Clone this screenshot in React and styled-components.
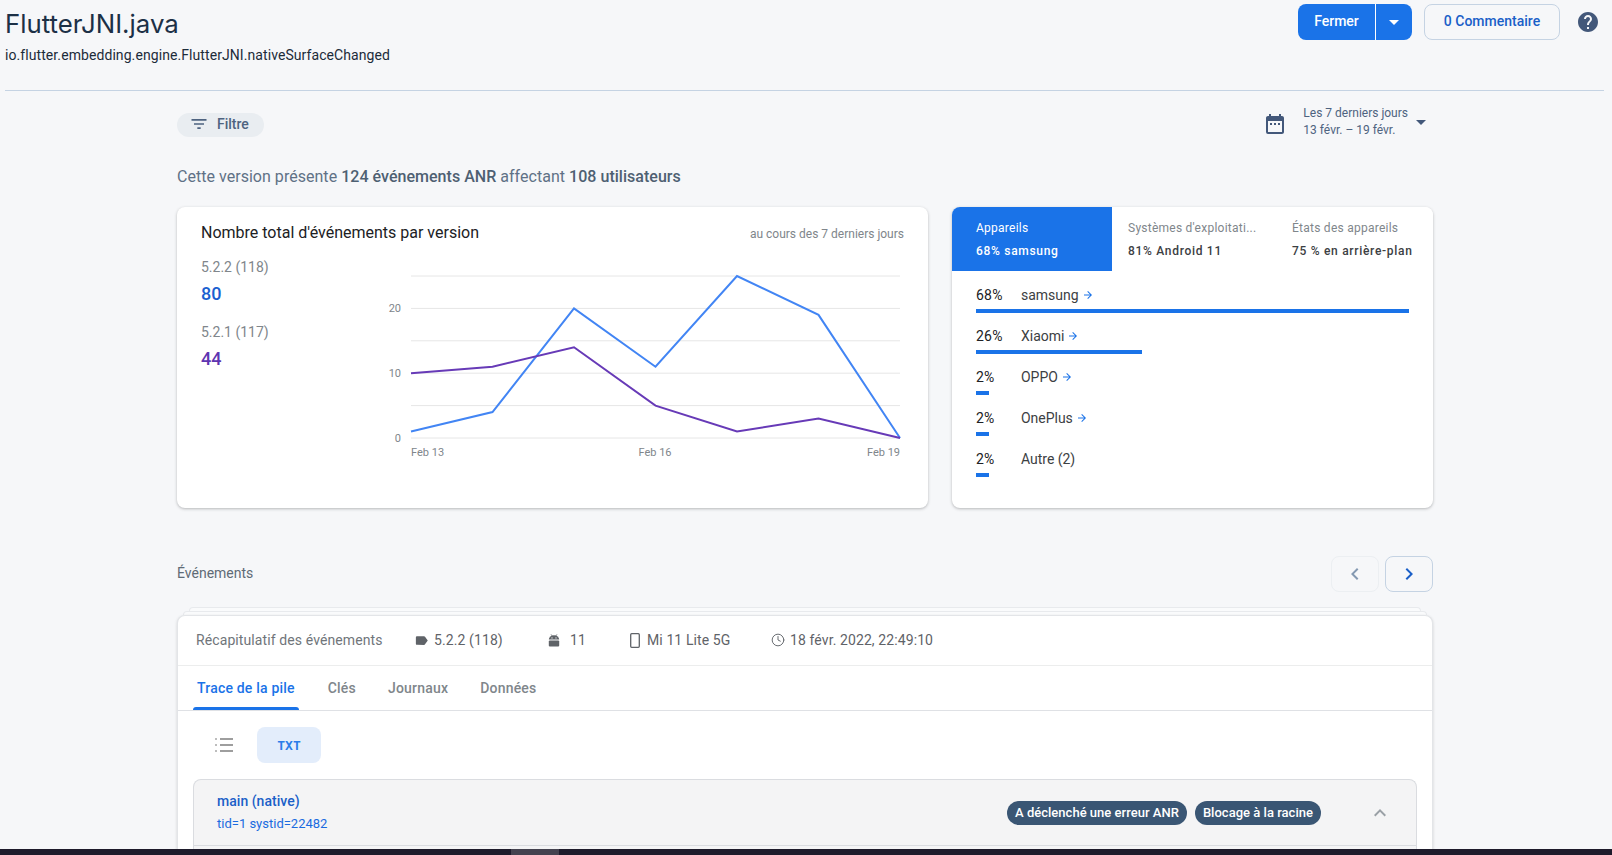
import React from 'react'
import styled, { createGlobalStyle } from 'styled-components'
import {
  MdFilterList,
  MdDateRange,
  MdHelp,
  MdArrowDropDown,
  MdArrowForward,
  MdChevronLeft,
  MdChevronRight,
  MdKeyboardArrowUp,
  MdLabel,
} from 'react-icons/md'
import { Clock } from 'lucide-react'

const blueSeries = [1, 4, 20, 11, 25, 19, 0]
const purpleSeries = [10, 11, 14, 5, 1, 3, 0]
const devices = [
  { pct: '68%', name: 'samsung', width: 433, link: true },
  { pct: '26%', name: 'Xiaomi', width: 166, link: true },
  { pct: '2%', name: 'OPPO', width: 13, link: true },
  { pct: '2%', name: 'OnePlus', width: 13, link: true },
  { pct: '2%', name: 'Autre (2)', width: 13, link: false },
]

const toPoints = (values) =>
  values.map((v, i) => `${31 + i * 81.5},${170 - v * 6.48}`).join(' ')

function Chart() {
  return (
    <ChartSvg viewBox="0 0 524 200" width="524" height="200">
      {[0, 5, 10, 15, 20, 25].map((v) => (
        <line key={v} x1="31" x2="520" y1={170 - v * 6.48} y2={170 - v * 6.48} stroke="#e6e6e6" strokeWidth="1" />
      ))}
      {[0, 10, 20].map((v) => (
        <AxisText key={v} x="21" y={174 - v * 6.48} textAnchor="end">{v}</AxisText>
      ))}
      <AxisText x="31" y="188">Feb 13</AxisText>
      <AxisText x="275" y="188" textAnchor="middle">Feb 16</AxisText>
      <AxisText x="520" y="188" textAnchor="end">Feb 19</AxisText>
      <polyline points={toPoints(blueSeries)} fill="none" stroke="#4285f4" strokeWidth="2" />
      <polyline points={toPoints(purpleSeries)} fill="none" stroke="#673ab7" strokeWidth="2" />
    </ChartSvg>
  )
}

function AndroidGlyph() {
  return (
    <svg width="12" height="13" viewBox="0 0 12 13" fill="currentColor">
      <path d="M0.8 5.6a5.2 4.4 0 0 1 10.4 0z" />
      <path d="M3 .3 4.2 2M9 .3 7.8 2" stroke="currentColor" strokeWidth="0.7" />
      <rect x="0.8" y="6.4" width="10.4" height="6" rx="1" />
      <circle cx="4" cy="3.9" r="0.6" fill="#fff" />
      <circle cx="8" cy="3.9" r="0.6" fill="#fff" />
    </svg>
  )
}

function PhoneGlyph() {
  return (
    <svg width="10" height="15" viewBox="0 0 10 15">
      <rect x="0.7" y="0.7" width="8.6" height="13.6" rx="1" fill="none" stroke="currentColor" strokeWidth="1.3" />
    </svg>
  )
}

function ListGlyph() {
  return (
    <svg width="18" height="14" viewBox="0 0 18 14" fill="#9e9e9e">
      {[0, 6, 12].map((y) => (
        <g key={y}>
          <rect x="0" y={y} width="2" height="2" fill="#bdbdbd" />
          <rect x="5" y={y} width="13" height="2" />
        </g>
      ))}
    </svg>
  )
}

export default function App() {
  return (
    <Page>
      <GlobalStyle />
      <Scroll>
        <Header>
          <div>
            <Title>FlutterJNI.java</Title>
            <Subtitle>io.flutter.embedding.engine.FlutterJNI.nativeSurfaceChanged</Subtitle>
          </div>
          <Actions>
            <SplitButton>
              <SplitMain>Fermer</SplitMain>
              <SplitArrow><MdArrowDropDown size={24} /></SplitArrow>
            </SplitButton>
            <CommentButton>0 Commentaire</CommentButton>
            <HelpIcon size={24} />
          </Actions>
        </Header>
        <Content>
          <FilterRow>
            <FilterChip><MdFilterList size={20} /> Filtre</FilterChip>
            <DatePicker>
              <MdDateRange size={24} />
              <DateText>
                <span>Les 7 derniers jours</span>
                <span>13 févr. – 19 févr.</span>
              </DateText>
              <MdArrowDropDown size={24} />
            </DatePicker>
          </FilterRow>
          <Summary>
            Cette version présente <b>124 événements ANR</b> affectant <b>108 utilisateurs</b>
          </Summary>
          <Cards>
            <ChartCard>
              <CardHead>
                <CardTitle>Nombre total d'événements par version</CardTitle>
                <CardHint>au cours des 7 derniers jours</CardHint>
              </CardHead>
              <ChartBody>
                <Legend>
                  <LegendLabel>5.2.2 (118)</LegendLabel>
                  <LegendValue $color="#1a5fd0">80</LegendValue>
                  <LegendLabel>5.2.1 (117)</LegendLabel>
                  <LegendValue $color="#5e35b1">44</LegendValue>
                </Legend>
                <Chart />
              </ChartBody>
            </ChartCard>
            <DeviceCard>
              <DeviceTabs>
                <DeviceTab $active $width={160} $pad={24}>
                  <small>Appareils</small>
                  <strong>68% samsung</strong>
                </DeviceTab>
                <DeviceTab $width={180} $pad={16}>
                  <small>Systèmes d'exploitati...</small>
                  <strong>81% Android 11</strong>
                </DeviceTab>
                <DeviceTab $width={141} $pad={0}>
                  <small>États des appareils</small>
                  <strong>75 % en arrière-plan</strong>
                </DeviceTab>
              </DeviceTabs>
              <DeviceList>
                {devices.map((d) => (
                  <DeviceRow key={d.name}>
                    <DeviceLine>
                      <DevicePct>{d.pct}</DevicePct>
                      <DeviceName>{d.name}</DeviceName>
                      {d.link && <MdArrowForward size={12} color="#1a73e8" />}
                    </DeviceLine>
                    <DeviceBar style={{ width: d.width }} />
                  </DeviceRow>
                ))}
              </DeviceList>
            </DeviceCard>
          </Cards>
          <EventsHead>
            <EventsLabel>Événements</EventsLabel>
            <NavGroup>
              <NavButton $disabled><MdChevronLeft size={24} /></NavButton>
              <NavButton><MdChevronRight size={24} /></NavButton>
            </NavGroup>
          </EventsHead>
          <StackEdge $inset={12} />
          <StackEdge $inset={6} />
          <EventCard>
            <MetaRow>
              <MetaTitle>Récapitulatif des événements</MetaTitle>
              <MetaItem $width={134} $gap={5}><MdLabel size={15} /> 5.2.2 (118)</MetaItem>
              <MetaItem $width={82} $gap={10}><AndroidGlyph /> 11</MetaItem>
              <MetaItem $width={141} $gap={7}><PhoneGlyph /> Mi 11 Lite 5G</MetaItem>
              <MetaItem $gap={5}><Clock size={14} strokeWidth={1.6} /> 18 févr. 2022, 22:49:10</MetaItem>
            </MetaRow>
            <Tabs>
              <Tab $active>Trace de la pile</Tab>
              <Tab>Clés</Tab>
              <Tab>Journaux</Tab>
              <Tab>Données</Tab>
            </Tabs>
            <Toolbar>
              <ListToggle><ListGlyph /></ListToggle>
              <TxtToggle>TXT</TxtToggle>
            </Toolbar>
            <Thread>
              <ThreadHead>
                <ThreadInfo>
                  <ThreadName>main (native)</ThreadName>
                  <ThreadIds>tid=1 systid=22482</ThreadIds>
                </ThreadInfo>
                <Badge>A déclenché une erreur ANR</Badge>
                <Badge>Blocage à la racine</Badge>
                <Collapse><MdKeyboardArrowUp size={24} /></Collapse>
              </ThreadHead>
            </Thread>
          </EventCard>
        </Content>
      </Scroll>
      <TaskBar><TaskItem /></TaskBar>
    </Page>
  )
}

const GlobalStyle = createGlobalStyle`
  html, body { margin: 0; padding: 0; height: 100%; overflow: hidden; }
  body { background: #f6f7f9; font-family: Roboto, sans-serif; color: #3c4043; }
  * { box-sizing: border-box; }
`

const Page = styled.div`
  height: 855px;
  display: flex;
  flex-direction: column;
`

const Scroll = styled.div`
  flex: 1;
  min-height: 0;
  overflow: hidden;
`

const Header = styled.header`
  height: 91px;
  margin: 0 8px 0 5px;
  display: flex;
  justify-content: space-between;
  border-bottom: 1px solid #c5d3e3;
`

const Title = styled.h1`
  margin: 6px 0 0;
  font: 400 25.8px/36px Inter, sans-serif;
  color: #1c3046;
`

const Subtitle = styled.p`
  margin: 3px 0 0;
  font-size: 14px;
  line-height: 20px;
  letter-spacing: 0.08px;
  color: #1c2b3a;
`

const Actions = styled.div`
  display: flex;
  align-items: flex-start;
  padding-top: 4px;
  margin-right: 4px;
`

const SplitButton = styled.div`
  display: flex;
  height: 36px;
  width: 114px;
  border-radius: 8px;
  overflow: hidden;
  background: #1a73e8;
  color: #fff;
`

const SplitMain = styled.div`
  width: 78px;
  display: flex;
  align-items: center;
  justify-content: center;
  padding-bottom: 2px;
  font-size: 14px;
  font-weight: 500;
  border-right: 1px solid #fff;
`

const SplitArrow = styled.div`
  flex: 1;
  display: flex;
  align-items: center;
  justify-content: center;
`

const CommentButton = styled.div`
  margin-left: 12px;
  width: 136px;
  height: 36px;
  display: flex;
  align-items: center;
  justify-content: center;
  padding-bottom: 2px;
  border: 1px solid #c5d3e3;
  border-radius: 8px;
  color: #1a5fc8;
  font-size: 14px;
  font-weight: 500;
`

const HelpIcon = styled(MdHelp)`
  margin: 6px 0 0 16px;
  color: #43587a;
`

const Content = styled.main`
  width: 1256px;
  margin-left: 177px;
`

const FilterRow = styled.div`
  height: 48px;
  padding: 22px 0 0;
  display: flex;
  justify-content: space-between;
  align-items: flex-start;
`

const FilterChip = styled.div`
  width: 87px;
  height: 24px;
  padding: 0 0 2px 12px;
  display: flex;
  align-items: center;
  gap: 8px;
  border-radius: 12px;
  background: #e9edf1;
  color: #4e6380;
  font-size: 14px;
  font-weight: 500;
`

const DatePicker = styled.div`
  display: flex;
  align-items: center;
  color: #43587a;
  margin: -4px 0 0 0;
  svg:first-child { margin-right: 16px; }
  svg:last-child { margin: -3px 0 0 1px; }
`

const DateText = styled.div`
  display: flex;
  flex-direction: column;
  margin-top: -4px;
  font-size: 12px;
  line-height: 16.5px;
  color: #4e6380;
`

const Summary = styled.p`
  margin: 27px 0 0;
  font-size: 16px;
  line-height: 22px;
  letter-spacing: 0.03px;
  color: #5f7186;
  b { font-weight: 500; color: #4e6072; }
`

const Cards = styled.div`
  margin-top: 19px;
  display: flex;
  gap: 24px;
`

const CardBase = styled.section`
  height: 301px;
  background: #fff;
  border-radius: 8px;
  box-shadow: 0 1px 3px rgba(60, 64, 67, 0.35);
`

const ChartCard = styled(CardBase)`
  width: 751px;
  padding: 15px 24px;
  color: #202124;
`

const CardHead = styled.div`
  display: flex;
  justify-content: space-between;
  align-items: center;
  height: 20px;
`

const CardTitle = styled.h2`
  margin: 0;
  font-size: 16px;
  font-weight: 400;
`

const CardHint = styled.span`
  margin-top: 4px;
  font-size: 12px;
  color: #80868b;
`

const ChartBody = styled.div`
  display: flex;
  justify-content: space-between;
  margin-top: 15px;
`

const Legend = styled.div`
  display: flex;
  flex-direction: column;
`

const LegendLabel = styled.div`
  font-size: 14px;
  line-height: 20px;
  color: #80868b;
`

const LegendValue = styled.div`
  margin: 5px 0 16px;
  font-size: 18px;
  line-height: 24px;
  font-weight: 500;
  color: ${(p) => p.$color};
`

const ChartSvg = styled.svg`
  margin: 11px 0 0 0;
  display: block;
`

const AxisText = styled.text`
  font: 11px Roboto, sans-serif;
  fill: #80868b;
`

const DeviceCard = styled(CardBase)`
  width: 481px;
  overflow: hidden;
`

const DeviceTabs = styled.div`
  display: flex;
  height: 64px;
`

const DeviceTab = styled.div`
  width: ${(p) => p.$width}px;
  padding: 13px 0 0 ${(p) => p.$pad}px;
  background: ${(p) => (p.$active ? '#1a73e8' : '#fff')};
  color: ${(p) => (p.$active ? '#fff' : '#3c4043')};
  small {
    display: block;
    font-size: 12px;
    line-height: 16px;
    letter-spacing: 0.25px;
    color: ${(p) => (p.$active ? '#fff' : '#80868b')};
  }
  strong {
    display: block;
    margin-top: 7px;
    font-size: 12px;
    line-height: 16px;
    font-weight: 500;
    letter-spacing: 0.7px;
    white-space: nowrap;
  }
`

const DeviceList = styled.div`
  padding: 14px 24px 0;
`

const DeviceRow = styled.div`
  height: 41px;
`

const DeviceLine = styled.div`
  display: flex;
  align-items: center;
  gap: 3px;
  height: 20px;
  font-size: 14px;
  color: #3c4043;
`

const DevicePct = styled.span`
  width: 42px;
  letter-spacing: 0.2px;
  color: #202124;
`

const DeviceName = styled.span`
  letter-spacing: -0.02px;
`

const DeviceBar = styled.div`
  height: 4px;
  margin-top: 4px;
  background: #1a73e8;
`

const EventsHead = styled.div`
  margin: 48px 0 15px;
  height: 36px;
  display: flex;
  justify-content: space-between;
  align-items: center;
`

const EventsLabel = styled.span`
  margin-top: -2px;
  font-size: 14px;
  color: #5f6b76;
`

const NavGroup = styled.div`
  display: flex;
  gap: 6px;
`

const NavButton = styled.div`
  width: 48px;
  height: 36px;
  display: flex;
  align-items: center;
  justify-content: center;
  border-radius: 8px;
  border: 1px solid ${(p) => (p.$disabled ? '#eceff2' : '#c5d3e3')};
  color: ${(p) => (p.$disabled ? '#8499b2' : '#1a5fc8')};
`

const StackEdge = styled.div`
  height: 4px;
  margin: 0 ${(p) => p.$inset}px;
  border: 1px solid #e8eaed;
  border-bottom: 0;
  border-radius: 8px 8px 0 0;
  background: #fafbfc;
`

const EventCard = styled.section`
  background: #fff;
  border-radius: 8px 8px 0 0;
  border: 1px solid #e3e5e8;
  border-bottom: 0;
  box-shadow: 0 1px 3px rgba(60, 64, 67, 0.2);
  height: 300px;
`

const MetaRow = styled.div`
  height: 50px;
  padding: 0 0 1px 18px;
  display: flex;
  align-items: center;
  border-bottom: 1px solid #eceded;
  font-size: 14px;
  letter-spacing: 0.1px;
  color: #5f6368;
`

const MetaTitle = styled.span`
  width: 218px;
  color: #70757a;
`

const MetaItem = styled.span`
  width: ${(p) => (p.$width ? `${p.$width}px` : 'auto')};
  display: flex;
  align-items: center;
  gap: ${(p) => p.$gap}px;
  svg { flex: none; }
`

const Tabs = styled.div`
  height: 45px;
  padding-left: 15px;
  display: flex;
  gap: 24px;
  border-bottom: 1px solid #dfe1e5;
`

const Tab = styled.div`
  position: relative;
  padding: 0 4px;
  height: 44px;
  line-height: 44px;
  font-size: 14px;
  font-weight: 500;
  letter-spacing: 0.2px;
  color: ${(p) => (p.$active ? '#1a73e8' : '#80868b')};
  ${(p) =>
    p.$active &&
    `margin-right: 1px;
    &::after {
      content: '';
      position: absolute;
      left: 0;
      right: 0;
      bottom: 0;
      height: 3px;
      background: #1a73e8;
      border-radius: 3px 3px 0 0;
    }`}
`

const Toolbar = styled.div`
  height: 68px;
  padding: 16px 0 0 37px;
  display: flex;
  gap: 12px;
  align-items: flex-start;
`

const ListToggle = styled.div`
  height: 36px;
  width: 30px;
  display: flex;
  align-items: center;
`

const TxtToggle = styled.div`
  width: 64px;
  height: 36px;
  display: flex;
  align-items: center;
  justify-content: center;
  border-radius: 8px;
  background: #e3edfb;
  color: #2b7de9;
  font: 700 13px 'DejaVu Sans Mono', monospace;
`

const Thread = styled.div`
  margin: 0 15px;
  height: 80px;
  background: #f4f4f5;
  border: 1px solid #dadce0;
  border-bottom: 0;
  border-radius: 8px 8px 0 0;
`

const ThreadHead = styled.div`
  height: 66px;
  padding: 0 24px 0 23px;
  display: flex;
  align-items: center;
  gap: 8px;
  border-bottom: 1px solid #dadce0;
`

const ThreadInfo = styled.div`
  flex: 1;
  margin-top: -2px;
`

const ThreadName = styled.div`
  font-size: 14px;
  font-weight: 500;
  line-height: 20px;
  letter-spacing: 0.03px;
  color: #1a5fc8;
`

const ThreadIds = styled.div`
  margin-top: 4px;
  font-size: 13px;
  line-height: 18px;
  color: #1a6be0;
`

const Badge = styled.span`
  height: 24px;
  padding: 0 8px;
  display: flex;
  align-items: center;
  border-radius: 12px;
  background: #3a5674;
  color: #fff;
  font-size: 13px;
  font-weight: 500;
  letter-spacing: 0.02px;
`

const Collapse = styled.div`
  margin-left: 39px;
  display: flex;
  color: #9aa0a6;
`

const TaskBar = styled.div`
  height: 6px;
  flex: none;
  background: #1e1b2b;
  padding-left: 511px;
`

const TaskItem = styled.div`
  width: 48px;
  height: 6px;
  background: #44424f;
`
